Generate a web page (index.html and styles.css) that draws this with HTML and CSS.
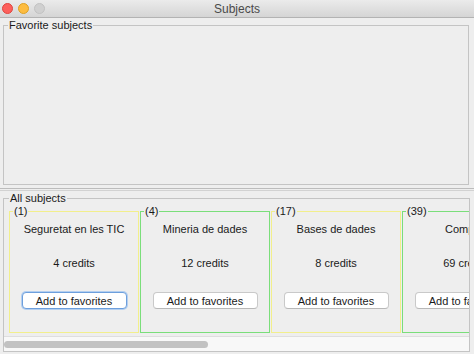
FILE: index.html
```html
<!DOCTYPE html>
<html lang="en">
<head>
    <meta charset="UTF-8">
    <title>Subjects</title>
    <link rel="stylesheet" href="styles.css">
</head>
<body>
    <div class="window">
        <!-- Title bar -->
        <div class="titlebar">
            <div class="lights">
                <span class="light close"></span>
                <span class="light minimize"></span>
                <span class="light zoom"></span>
            </div>
            <div class="title">Subjects</div>
            <div></div>
        </div>

        <!-- Favorites (empty) -->
        <fieldset class="panel favorites">
            <legend>Favorite subjects</legend>
        </fieldset>

        <div class="divider"></div>

        <!-- All subjects -->
        <fieldset class="panel all">
            <legend>All subjects</legend>
            <div class="scroll">
                <div class="cards">
                    <fieldset class="card yellow">
                        <legend>(1)</legend>
                        <div class="name">Seguretat en les TIC</div>
                        <div class="credits">4 credits</div>
                        <button class="add focused">Add to favorites</button>
                    </fieldset>
                    <fieldset class="card green">
                        <legend>(4)</legend>
                        <div class="name">Mineria de dades</div>
                        <div class="credits">12 credits</div>
                        <button class="add">Add to favorites</button>
                    </fieldset>
                    <fieldset class="card yellow">
                        <legend>(17)</legend>
                        <div class="name">Bases de dades</div>
                        <div class="credits">8 credits</div>
                        <button class="add">Add to favorites</button>
                    </fieldset>
                    <fieldset class="card green">
                        <legend>(39)</legend>
                        <div class="name">Comptes</div>
                        <div class="credits">69 credits</div>
                        <button class="add">Add to favorites</button>
                    </fieldset>
                </div>
            </div>
            <div class="hscroll">
                <div class="thumb"></div>
            </div>
        </fieldset>
    </div>
</body>
</html>
```

FILE: styles.css
```css
/* Base styles */
body {
    margin: 0;
    background: #eeeeee;
    font-family: 'Liberation Sans', Arial, sans-serif;
    font-size: 11px;
    color: #1a1a1a;
}

.window {
    width: 474px;
    height: 354px;
    display: flex;
    flex-direction: column;
    overflow: hidden;
}

/* Title bar */
.titlebar {
    height: 17px;
    flex: none;
    display: grid;
    grid-template-columns: 1fr auto 1fr;
    align-items: center;
    background: linear-gradient(#ebebeb, #d5d5d5);
    border-bottom: 1px solid #b3b3b3;
}

.lights {
    display: flex;
    gap: 5px;
    padding-left: 2px;
}

.light {
    width: 11px;
    height: 11px;
    border-radius: 50%;
    box-sizing: border-box;
}

.close {
    background: #fc605c;
    border: 1px solid #e0443e;
}

.minimize {
    background: #fdbc40;
    border: 1px solid #dea123;
}

.zoom {
    background: #d0d0d0;
    border: 1px solid #c2c2c2;
}

.title {
    font-size: 12px;
    color: #4a4a4a;
}

/* Titled panels */
fieldset {
    margin: 0;
    padding: 0;
    min-width: 0;
    box-sizing: border-box;
}

legend {
    padding: 0 1px;
    line-height: 14px;
}

.panel {
    flex: none;
    border: 1px solid #c4c4c4;
    margin-left: 3px;
    margin-right: 5px;
}

.panel > legend {
    margin-left: 4px;
}

.favorites {
    height: 167px;
}

.divider {
    flex: none;
    margin-top: 3px;
    height: 1px;
    border-top: 1px solid #bcbcbc;
    border-bottom: 1px solid #d2d2d2;
}

.all {
    margin-right: 4px;
    height: 161px;
}

.all > legend {
    margin-left: 5px;
}

/* Scroll area with cards */
.scroll {
    height: 131px;
    overflow: hidden;
}

.cards {
    display: flex;
    gap: 1px;
    padding-left: 5px;
}

.card {
    flex: none;
    width: 130px;
    height: 128px;
    display: flex;
    flex-direction: column;
    align-items: center;
    padding: 0 3px;
}

.card > legend {
    line-height: 13px;
}

.yellow {
    border: 1px solid #f2ef8c;
}

.green {
    border: 1px solid #7ade7a;
}

.name {
    margin-top: 4px;
    line-height: 14px;
    white-space: nowrap;
}

.credits {
    margin-top: 20px;
    line-height: 14px;
}

.add {
    margin-top: 22px;
    width: 105px;
    height: 17px;
    padding: 0;
    font-family: inherit;
    font-size: 11px;
    color: #1a1a1a;
    background: #ffffff;
    border: 1px solid #c9c9c9;
    border-bottom-color: #b8b8b8;
    border-radius: 4px;
}

.add.focused {
    border-color: #6d9fdc;
    box-shadow: 0 0 0 1px #b4cff0;
}

/* Horizontal scrollbar */
.hscroll {
    height: 10px;
    padding-top: 4px;
    border-top: 1px solid #dedede;
    background: #f8f8f8;
}

.thumb {
    width: 204px;
    height: 7px;
    border-radius: 4px;
    background: #c2c2c2;
}
```
